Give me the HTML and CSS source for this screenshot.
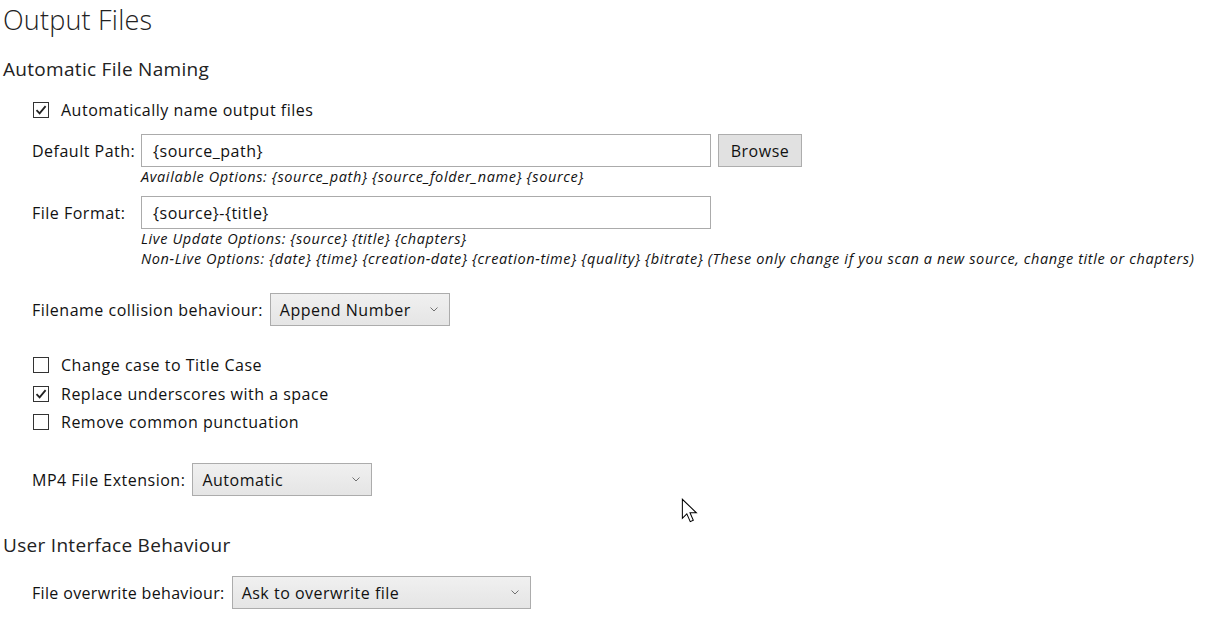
FILE: index.html
```html
<!DOCTYPE html>
<html>
<head>
<meta charset="utf-8">
<link rel="stylesheet" href="styles.css">
</head>
<body>
<div class="page">
  <h1 class="title">Output Files</h1>
  <h2 class="section">Automatic File Naming</h2>
  <div class="group">
    <label class="check row-auto"><span class="box on"><svg viewBox="0 0 16 16" width="16" height="16"><path d="M3.5 8.2 L6.6 11.4 L12.6 4.2" fill="none" stroke="#222" stroke-width="1.8"/></svg></span><span>Automatically name output files</span></label>

    <div class="pathgrid">
      <div class="lbl">Default Path:</div>
      <div class="fieldrow"><div class="textbox">{source_path}</div><div class="button">Browse</div></div>
      <div></div>
      <div class="hint">Available Options: {source_path} {source_folder_name} {source}</div>
      <div class="lbl lbl2">File Format:</div>
      <div class="fieldrow fr2"><div class="textbox">{source}-{title}</div></div>
      <div></div>
      <div class="hints">
        <div class="hint">Live Update Options: {source} {title} {chapters}</div>
        <div class="hint">Non-Live Options: {date} {time} {creation-date} {creation-time} {quality} {bitrate} (These only change if you scan a new source, change title or chapters)</div>
      </div>
    </div>

    <div class="combo-row collision">
      <span class="lbl">Filename collision behaviour:</span>
      <div class="combo w-collision"><span>Append Number</span><svg class="chev" viewBox="0 0 8 5" width="8" height="5"><path d="M0.5 0.5 L4 4 L7.5 0.5" fill="none" stroke="#707070" stroke-width="1"/></svg></div>
    </div>

    <div class="checks">
      <label class="check"><span class="box"></span><span>Change case to Title Case</span></label>
      <label class="check"><span class="box on"><svg viewBox="0 0 16 16" width="16" height="16"><path d="M3.5 8.2 L6.6 11.4 L12.6 4.2" fill="none" stroke="#222" stroke-width="1.8"/></svg></span><span>Replace underscores with a space</span></label>
      <label class="check"><span class="box"></span><span>Remove common punctuation</span></label>
    </div>

    <div class="combo-row mp4">
      <span class="lbl">MP4 File Extension:</span>
      <div class="combo w-mp4"><span>Automatic</span><svg class="chev" viewBox="0 0 8 5" width="8" height="5"><path d="M0.5 0.5 L4 4 L7.5 0.5" fill="none" stroke="#707070" stroke-width="1"/></svg></div>
    </div>
  </div>

  <h2 class="section ui">User Interface Behaviour</h2>
  <div class="group">
    <div class="combo-row overwrite">
      <span class="lbl lbl-over">File overwrite behaviour:</span>
      <div class="combo w-over"><span>Ask to overwrite file</span><svg class="chev" viewBox="0 0 8 5" width="8" height="5"><path d="M0.5 0.5 L4 4 L7.5 0.5" fill="none" stroke="#707070" stroke-width="1"/></svg></div>
    </div>
  </div>

  <svg class="cursor" viewBox="0 0 14 22" width="18" height="28"><path d="M1 1 L1 16 L4.5 12.5 L7.2 18.6 L9.6 17.5 L7 11.6 L12 11.6 Z" fill="#fff" stroke="#000" stroke-width="0.8" stroke-linejoin="miter"/></svg>
</div>
</body>
</html>
```
FILE: styles.css
```css
html, body {
  margin: 0;
  padding: 0;
  background: #ffffff;
}
body {
  font-family: "Open Sans", "Noto Sans", sans-serif;
  color: #111;
  font-size: 16px;
  letter-spacing: 0.5px;
}
.page {
  position: relative;
  width: 1207px;
  height: 639px;
  overflow: hidden;
  padding-left: 3px;
  box-sizing: border-box;
}
.title {
  margin: 0;
  padding-top: 2px;
  font-size: 27px;
  font-weight: 300;
  line-height: 36px;
  letter-spacing: 0.2px;
  color: #222;
}
.section {
  margin: 18px 0 0 0;
  font-size: 19px;
  font-weight: 400;
  line-height: 26px;
  letter-spacing: 0.3px;
  color: #222;
}
.section.ui {
  margin-top: 36px;
}
.group {
  padding-left: 29px;
}
.check {
  display: flex;
  align-items: center;
  gap: 12px;
  height: 28.5px;
  padding-left: 1px;
}
.row-auto {
  margin-top: 14px;
  height: 28px;
}
.box {
  width: 14px;
  height: 14px;
  border: 1px solid #333;
  background: #fff;
  display: flex;
  align-items: center;
  justify-content: center;
  flex: none;
}
.box svg {
  flex: none;
}
.pathgrid {
  display: grid;
  grid-template-columns: 109px auto;
  margin-top: 10px;
}
.lbl {
  display: flex;
  align-items: center;
  white-space: nowrap;
}
.lbl-over {
  letter-spacing: 0.34px;
}
.fieldrow {
  display: flex;
  gap: 7px;
  height: 33px;
}
.fr2 {
  margin-top: 9px;
}
.lbl2 {
  margin-top: 9px;
}
.textbox {
  width: 570px;
  height: 33px;
  box-sizing: border-box;
  border: 1px solid #ababab;
  background: #fff;
  padding-left: 11px;
  display: flex;
  align-items: center;
}
.button {
  width: 84px;
  height: 33px;
  box-sizing: border-box;
  border: 1px solid #adadad;
  background: #e1e1e1;
  display: flex;
  align-items: center;
  justify-content: center;
}
.hint {
  font-style: italic;
  font-size: 14.5px;
  letter-spacing: 0.62px;
  line-height: 20px;
  white-space: nowrap;
  color: #111;
}
.combo-row {
  display: flex;
  align-items: center;
  gap: 7px;
}
.collision {
  margin-top: 24px;
}
.mp4 {
  margin-top: 26.75px;
}
.overwrite {
  margin-top: 18px;
}
.combo {
  height: 33px;
  box-sizing: border-box;
  border: 1px solid #acacac;
  background: linear-gradient(#f0f0f0, #e5e5e5);
  display: flex;
  align-items: center;
  justify-content: space-between;
  padding: 0 11px 0 9px;
}
.w-collision { width: 180px; }
.w-mp4 { width: 180px; }
.w-over { width: 299px; }
.checks {
  margin-top: 24.75px;
}
.cursor {
  position: absolute;
  left: 681px;
  top: 498px;
}
```
